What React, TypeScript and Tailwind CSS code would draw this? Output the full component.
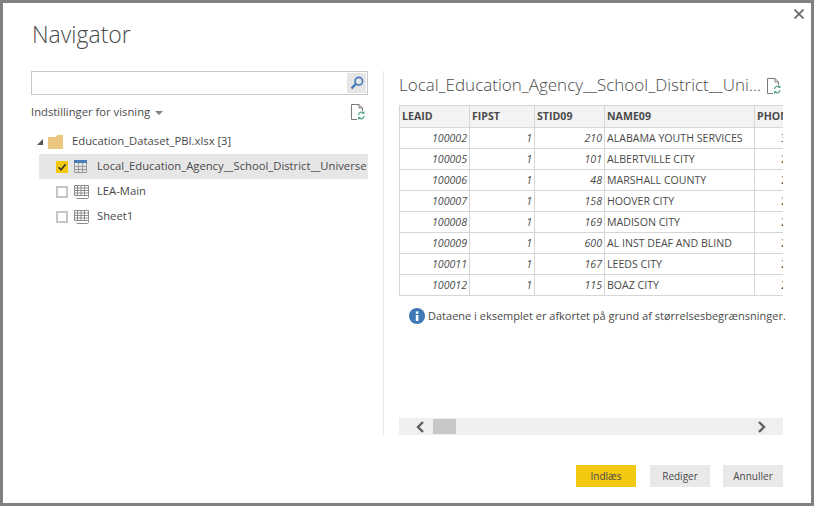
import { ReactNode } from "react";

const rows = [
  ["100002", "1", "210", "ALABAMA YOUTH SERVICES", "3"],
  ["100005", "1", "101", "ALBERTVILLE CITY", "2"],
  ["100006", "1", "48", "MARSHALL COUNTY", "2"],
  ["100007", "1", "158", "HOOVER CITY", "2"],
  ["100008", "1", "169", "MADISON CITY", "2"],
  ["100009", "1", "600", "AL INST DEAF AND BLIND", "2"],
  ["100011", "1", "167", "LEEDS CITY", "2"],
  ["100012", "1", "115", "BOAZ CITY", "2"],
];

function RefreshFile({ className }: { className?: string }) {
  return (
    <svg className={className} viewBox="0 0 14 16" width="14" height="16" fill="none">
      <path d="M6 15.5H.5V.5H8L11.5 4v3" stroke="#7a7a7a" strokeWidth="1" />
      <path d="M8 .5V4h3.5" stroke="#7a7a7a" strokeWidth="1" />
      <path d="M7.5 11a3 3 0 0 1 5-2" stroke="#5aa588" strokeWidth="1.3" />
      <path d="M13.5 7v3h-3z" fill="#5aa588" />
      <path d="M13 12a3 3 0 0 1-5 2" stroke="#5aa588" strokeWidth="1.3" />
      <path d="M7 16v-3h3z" fill="#5aa588" />
    </svg>
  );
}

function SheetIcon() {
  return (
    <svg viewBox="0 0 15 14" width="15" height="14" fill="none" stroke="#8c8c8c" strokeWidth="1" className="shrink-0">
      <path d="M.5.5h14v10H.5zM.5 3h14M.5 5.5h14M.5 8h14M3.5.5v10M7 .5v10M10.5.5v10" />
      <path d="M14.5 10.5v2l-1 1H3l-1-1" />
    </svg>
  );
}

function TableIcon() {
  return (
    <svg viewBox="0 0 13 13" width="13" height="13" fill="none" className="shrink-0">
      <path d="M.5.5h12v12H.5zM.5 6.5h12M.5 9.5h12M4.5 3v9.5M8.5 3v9.5" stroke="#9a9a9a" />
      <rect x="0" y="0" width="13" height="3" fill="#4a7ebb" />
    </svg>
  );
}

function Check({ on }: { on?: boolean }) {
  return on ? (
    <span className="flex h-3 w-3 shrink-0 items-center justify-center bg-[#f2c811]">
      <svg viewBox="0 0 12 12" width="12" height="12" fill="none">
        <path d="M2.5 6.2 5 8.7 9.6 3.2" stroke="#333" strokeWidth="1.6" />
      </svg>
    </span>
  ) : (
    <span className="h-3 w-3 shrink-0 border-2 border-[#c6c6c6] bg-white" />
  );
}

function TreeRow({ on, icon, children }: { on?: boolean; icon: ReactNode; children: ReactNode }) {
  return (
    <div className={`flex h-[25px] items-center overflow-hidden pl-[17px] ${on ? "bg-[#e6e6e6]" : ""}`}>
      <Check on={on} />
      <span className="ml-[6px] flex w-[23px] shrink-0">{icon}</span>
      <span className="whitespace-nowrap">{children}</span>
    </div>
  );
}

function Btn({ yellow, children }: { yellow?: boolean; children: ReactNode }) {
  return (
    <button className={`flex h-[22px] w-[60px] items-center justify-center text-[10px] text-[#4a4a4a] ${yellow ? "bg-[#f2c811]" : "bg-[#e9e9e9]"}`}>
      {children}
    </button>
  );
}

export default function App() {
  return (
    <div className="relative flex h-[506px] w-[814px] flex-col border-[3px] border-[#808080] bg-white font-['Open_Sans','Noto_Sans',sans-serif] text-[11.25px] text-[#4a4a4a]">
      {/* close */}
      <svg className="absolute right-[7px] top-[6px]" viewBox="0 0 10 10" width="10" height="10" fill="none">
        <path d="M.5.5l9 9M9.5.5l-9 9" stroke="#6a6a6a" strokeWidth="1.8" />
      </svg>

      <h1 className="ml-[29px] mt-[15px] h-[53px] text-[23px] font-light leading-[32px]">Navigator</h1>

      <div className="flex h-[364px]">
        {/* left */}
        <div className="ml-[28px] w-[337px] shrink-0">
          <div className="flex h-[24px] items-center justify-end border border-[#c8c8c8] pr-px">
            <span className="flex h-[20px] w-[19px] items-center justify-center bg-[#e6e6e6]">
              <svg viewBox="0 0 14 14" width="14" height="14" fill="none">
                <circle cx="8.8" cy="5.2" r="3.8" stroke="#3f78b5" strokeWidth="1.6" />
                <path d="M5.8 8 1.5 12.5" stroke="#3f78b5" strokeWidth="2.4" />
              </svg>
            </span>
          </div>
          <div className="mt-[6px] flex h-[22px] items-center justify-between pr-[3px]">
            <span className="flex items-center gap-[5px] whitespace-nowrap">
              Indstillinger for visning
              <span className="mt-px h-0 w-0 border-x-[4px] border-t-[4px] border-x-transparent border-t-[#808080]" />
            </span>
            <RefreshFile />
          </div>
          <div className="mt-[6px] flex h-[25px] items-center pl-[6px]">
            <span className="h-0 w-0 border-b-[6px] border-l-[6px] border-b-[#555] border-l-transparent" />
            <svg className="ml-[5px]" viewBox="0 0 15 14" width="15" height="14">
              <path d="M0 2h8l1-2h6v14H0z" fill="#ebc67f" />
            </svg>
            <span className="ml-[9px] whitespace-nowrap">Education_Dataset_PBI.xlsx [3]</span>
          </div>
          <div className="ml-[8px]">
            <TreeRow on icon={<TableIcon />}>Local_Education_Agency__School_District__Universe</TreeRow>
            <TreeRow icon={<SheetIcon />}>LEA-Main</TreeRow>
            <TreeRow icon={<SheetIcon />}>Sheet1</TreeRow>
          </div>
        </div>

        {/* divider */}
        <div className="ml-[15px] w-px shrink-0 bg-[#e6e6e6]" />

        {/* right */}
        <div className="ml-[15px] flex w-[384px] shrink-0 flex-col">
          <div className="flex h-[34px] items-start">
            <span className="w-[368px] shrink-0 whitespace-nowrap text-[17px] font-light leading-[28px]">Local_Education_Agency__School_District__Uni...</span>
            <RefreshFile className="mt-[7px]" />
          </div>
          <div className="w-[384px] overflow-hidden">
            <table className="w-[500px] table-fixed border-collapse text-[10.6px]">
              <colgroup>
                <col className="w-[70px]" />
                <col className="w-[65px]" />
                <col className="w-[70px]" />
                <col className="w-[150px]" />
                <col className="w-[145px]" />
              </colgroup>
              <thead>
                <tr className="h-[22px] bg-[#f3f3f3] font-bold">
                  {["LEAID", "FIPST", "STID09", "NAME09", "PHONE"].map((h) => (
                    <th key={h} className="border border-[#d6d6d6] px-[2px] text-left font-bold">{h}</th>
                  ))}
                </tr>
              </thead>
              <tbody>
                {rows.map((r) => (
                  <tr key={r[0]} className="h-[21px]">
                    <td className="border border-[#d6d6d6] px-[2px] pt-px text-right italic">{r[0]}</td>
                    <td className="border border-[#d6d6d6] px-[2px] pt-px text-right italic">{r[1]}</td>
                    <td className="border border-[#d6d6d6] px-[2px] pt-px text-right italic">{r[2]}</td>
                    <td className="whitespace-nowrap border border-[#d6d6d6] px-[2px] pt-px">{r[3]}</td>
                    <td className="border border-[#d6d6d6] pl-[26px] pt-px">{r[4]}</td>
                  </tr>
                ))}
              </tbody>
            </table>
          </div>
          <div className="ml-[10px] mt-[11px] flex h-[18px] items-center whitespace-nowrap text-[11px]">
            <svg className="shrink-0" viewBox="0 0 16 16" width="16" height="16">
              <circle cx="8" cy="8" r="8" fill="#3f78b5" />
              <rect x="6.8" y="7" width="2.6" height="6" fill="#fff" />
              <rect x="6.8" y="3.4" width="2.6" height="2.4" fill="#fff" />
            </svg>
            <span className="ml-[3px]">Dataene i eksemplet er afkortet på grund af størrelsesbegrænsninger.</span>
          </div>
          {/* scrollbar */}
          <div className="mt-auto flex h-[17px] items-center bg-[#efefef]">
            <svg className="ml-[16px]" viewBox="0 0 10 12" width="10" height="12" fill="none">
              <path d="M8 1 3 6l5 5" stroke="#5f5f5f" strokeWidth="2.4" />
            </svg>
            <span className="ml-[8px] h-[15px] w-[23px] bg-[#c8c8c8]" />
            <svg className="ml-auto mr-[16px]" viewBox="0 0 10 12" width="10" height="12" fill="none">
              <path d="M2 1l5 5-5 5" stroke="#5f5f5f" strokeWidth="2.4" />
            </svg>
          </div>
        </div>
      </div>

      <div className="mt-[30px] flex justify-end gap-[14px] pr-[28px]">
        <Btn yellow>Indlæs</Btn>
        <Btn>Rediger</Btn>
        <div className="-ml-px"><Btn>Annuller</Btn></div>
      </div>
    </div>
  );
}
